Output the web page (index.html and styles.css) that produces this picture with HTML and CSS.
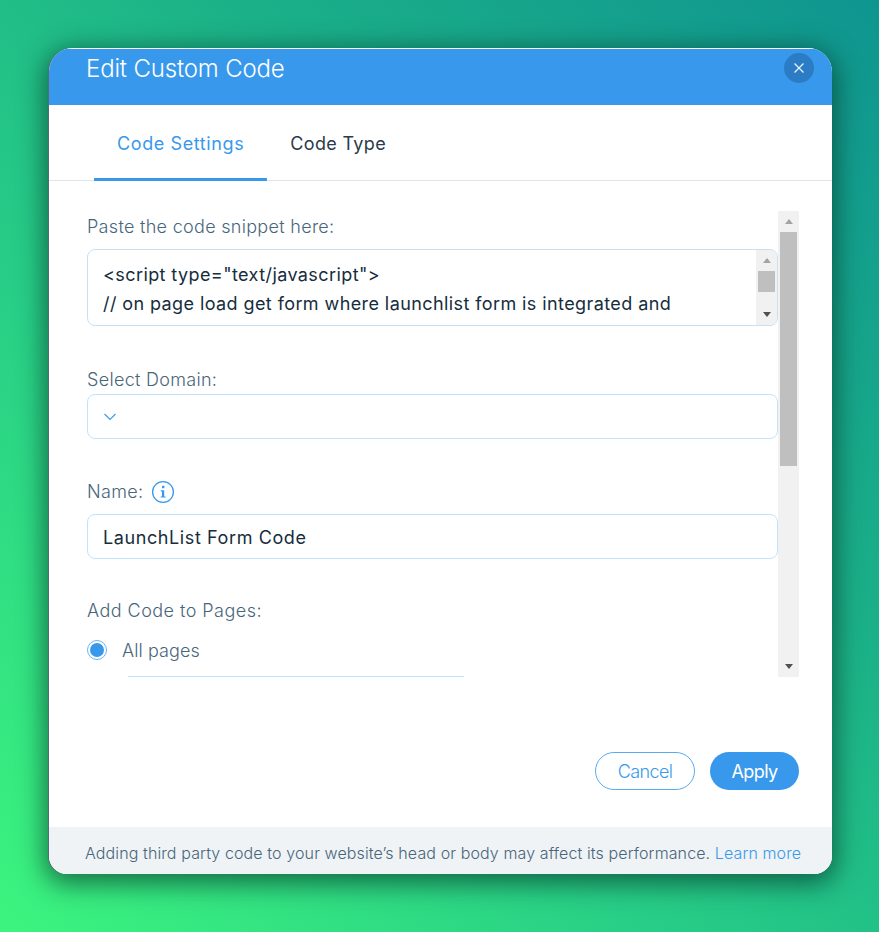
FILE: index.html
```html
<!DOCTYPE html>
<html lang="en">
<head>
<meta charset="utf-8">
<title>Edit Custom Code</title>
<link rel="stylesheet" href="styles.css">
</head>
<body>
<div class="dialog">
  <header class="head">
    <h1 class="title">Edit Custom Code</h1>
    <button class="close" aria-label="Close">
      <svg width="10" height="10" viewBox="0 0 10 10"><path d="M0.5 0.5L9.5 9.5M9.5 0.5L0.5 9.5" stroke="#eaf4fd" stroke-width="1.2" fill="none"/></svg>
    </button>
  </header>
  <nav class="tabs">
    <div class="tab active">Code Settings</div>
    <div class="tab">Code Type</div>
  </nav>
  <div class="body">
    <div class="scrollarea">
      <div class="content">
        <div class="label first">Paste the code snippet here:</div>
        <div class="textarea">
          <div class="code">
            <div>&lt;script type="text/javascript"&gt;</div>
            <div>// on page load get form where launchlist form is integrated and</div>
          </div>
          <div class="sbar small">
            <span class="arrow up"></span>
            <span class="thumb"></span>
            <span class="spring"></span>
            <span class="arrow down"></span>
          </div>
        </div>
        <div class="label l-domain">Select Domain:</div>
        <div class="input select">
          <svg width="14" height="8" viewBox="0 0 14 8"><path d="M1.5 1L7 6.5L12.5 1" stroke="#3899ec" stroke-width="1.1" fill="none"/></svg>
        </div>
        <div class="label l-name">Name:
          <svg class="info" width="24" height="24" viewBox="0 0 24 24"><circle cx="12" cy="12" r="10.4" stroke="#3899ec" stroke-width="1.3" fill="none"/><rect x="11" y="5.8" width="2.4" height="2.4" fill="#3899ec"/><path d="M9.8 10.2H13.2V16.4H14.6V17.6H9.6V16.4H11V11.4H9.8Z" fill="#3899ec"/></svg>
        </div>
        <div class="input typed">LaunchList Form Code</div>
        <div class="label l-pages">Add Code to Pages:</div>
        <div class="radio-row">
          <span class="radio"><span class="dot"></span></span>
          <span class="radio-text">All pages</span>
        </div>
        <div class="rule"></div>
      </div>
      <div class="sbar large">
        <span class="arrow up"></span>
        <span class="thumb"></span>
        <span class="spring"></span>
        <span class="arrow down"></span>
      </div>
    </div>
    <div class="actions">
      <button class="btn ghost">Cancel</button>
      <button class="btn solid">Apply</button>
    </div>
  </div>
  <footer class="foot">Adding third party code to your website’s head or body may affect its performance. <a class="more">Learn more</a></footer>
</div>
</body>
</html>
```

FILE: styles.css
```css
* { box-sizing: border-box; }
html, body { margin: 0; height: 932px; }
body {
  width: 879px;
  overflow: hidden;
  padding: 48px 47px 58px 49px;
  background: linear-gradient(45deg, #3cf47e 0%, #28cf86 35%, #1bb088 65%, #0f9590 100%);
  font-family: Inter, "Liberation Sans", Arial, sans-serif;
}
.dialog {
  width: 783px;
  height: 826px;
  display: flex;
  flex-direction: column;
  background: #fff;
  border-radius: 24px 24px 18px 18px;
  overflow: hidden;
  box-shadow: -1px 0 0 #566a78, 0 6px 26px 4px rgba(5, 50, 40, 0.65);
}
.head {
  height: 57px;
  flex: none;
  background: #3899ec;
  border-top: 1px solid #fff;
  display: flex;
  justify-content: space-between;
  padding: 0 18px 0 37px;
}
.title {
  margin: 5px 0 0;
  font-size: 24px;
  line-height: 30px;
  font-weight: 300;
  color: #fff;
  letter-spacing: -0.16px;
}
.close {
  width: 30px;
  height: 30px;
  margin-top: 4px;
  padding: 0;
  border: 0;
  border-radius: 50%;
  background: #2b7cc5;
  display: flex;
  align-items: center;
  justify-content: center;
}
.tabs {
  height: 76px;
  flex: none;
  display: flex;
  padding-left: 45px;
  border-bottom: 1px solid #dfe5eb;
}
.tab {
  padding: 0 23px;
  height: 76px;
  line-height: 77px;
  font-size: 18px;
  letter-spacing: 0.35px;
  color: #2b3b4c;
}
.tab.active {
  color: #3899ec;
  letter-spacing: 0.6px;
  border-bottom: 3px solid #3899ec;
}
.body {
  flex: 1;
  padding: 30px 33px 0 38px;
  display: flex;
  flex-direction: column;
}
.scrollarea {
  height: 466px;
  flex: none;
  display: flex;
  overflow: hidden;
}
.content {
  width: 691px;
  flex: none;
}
.label {
  font-size: 18px;
  font-weight: 300;
  line-height: 22px;
  letter-spacing: 0.3px;
  color: #48667b;
}
.first { margin-top: 5px; }
.l-domain { margin-top: 43px; }
.l-name { margin-top: 41px; display: flex; align-items: center; gap: 8px; height: 24px; }
.l-pages { margin-top: 41px; letter-spacing: 0.46px; }
.info { flex: none; }
.textarea {
  margin-top: 11px;
  height: 77px;
  border: 1px solid #c5e1f3;
  border-radius: 8px;
  display: flex;
  overflow: hidden;
}
.code {
  flex: 1;
  padding: 10px 15px 0;
  font-size: 18px;
  line-height: 29px;
  color: #162d3d;
  letter-spacing: 0.41px;
  white-space: nowrap;
}
.input {
  margin-top: 3px;
  height: 45px;
  border: 1px solid #c1e4fe;
  border-radius: 8px;
  padding: 0 15px;
  display: flex;
  align-items: center;
  font-size: 18px;
  color: #162d3d;
}
.l-name + .input { margin-top: 10px; }
.typed { padding-top: 2px; letter-spacing: 0.6px; }
.radio-row {
  margin-top: 16px;
  display: flex;
  align-items: center;
  height: 24px;
}
.radio {
  width: 20px;
  height: 20px;
  border: 1px solid #6db3f0;
  border-radius: 50%;
  display: flex;
  align-items: center;
  justify-content: center;
}
.dot {
  width: 14px;
  height: 14px;
  border-radius: 50%;
  background: #3899ec;
}
.radio-text {
  margin-left: 15px;
  font-size: 18px;
  font-weight: 300;
  letter-spacing: 0.1px;
  color: #48667b;
}
.rule {
  margin: 14px 0 0 41px;
  width: 336px;
  border-top: 1px solid #c1e4fe;
}
.sbar {
  flex: none;
  display: flex;
  flex-direction: column;
  align-items: center;
  background: #f1f1f1;
}
.sbar.small { width: 21px; height: 75px; }
.sbar.large { width: 21px; height: 466px; margin-left: auto; }
.thumb { background: #bfbfbf; display: block; }
.small .thumb { width: 17px; height: 21px; margin-top: 8px; }
.large .thumb { width: 17px; height: 234px; margin-top: 8px; }
.spring { flex: 1; }
.arrow { width: 0; height: 0; border-left: 4.5px solid transparent; border-right: 4.5px solid transparent; display: block; }
.arrow.up { border-bottom: 5px solid #a3a3a3; margin-top: 8px; }
.arrow.down { border-top: 5px solid #505050; margin-bottom: 8px; }
.actions {
  margin-top: 75px;
  display: flex;
  justify-content: flex-end;
  gap: 15px;
}
.btn {
  height: 38px;
  border-radius: 19px;
  font-family: inherit;
  font-size: 18px;
  letter-spacing: -0.6px;
  padding: 0;
}
.ghost { width: 100px; background: #fff; border: 1px solid #5aaaf0; color: #3899ec; font-weight: 300; }
.solid { width: 89px; background: #3899ec; border: 0; color: #fff; }
.foot {
  height: 47px;
  flex: none;
  background: #eff3f6;
  padding: 16px 0 0 36px;
  font-size: 16px;
  font-weight: 300;
  line-height: 20px;
  letter-spacing: 0.11px;
  color: #486579;
  white-space: nowrap;
}
.more { color: #3899ec; }
```
